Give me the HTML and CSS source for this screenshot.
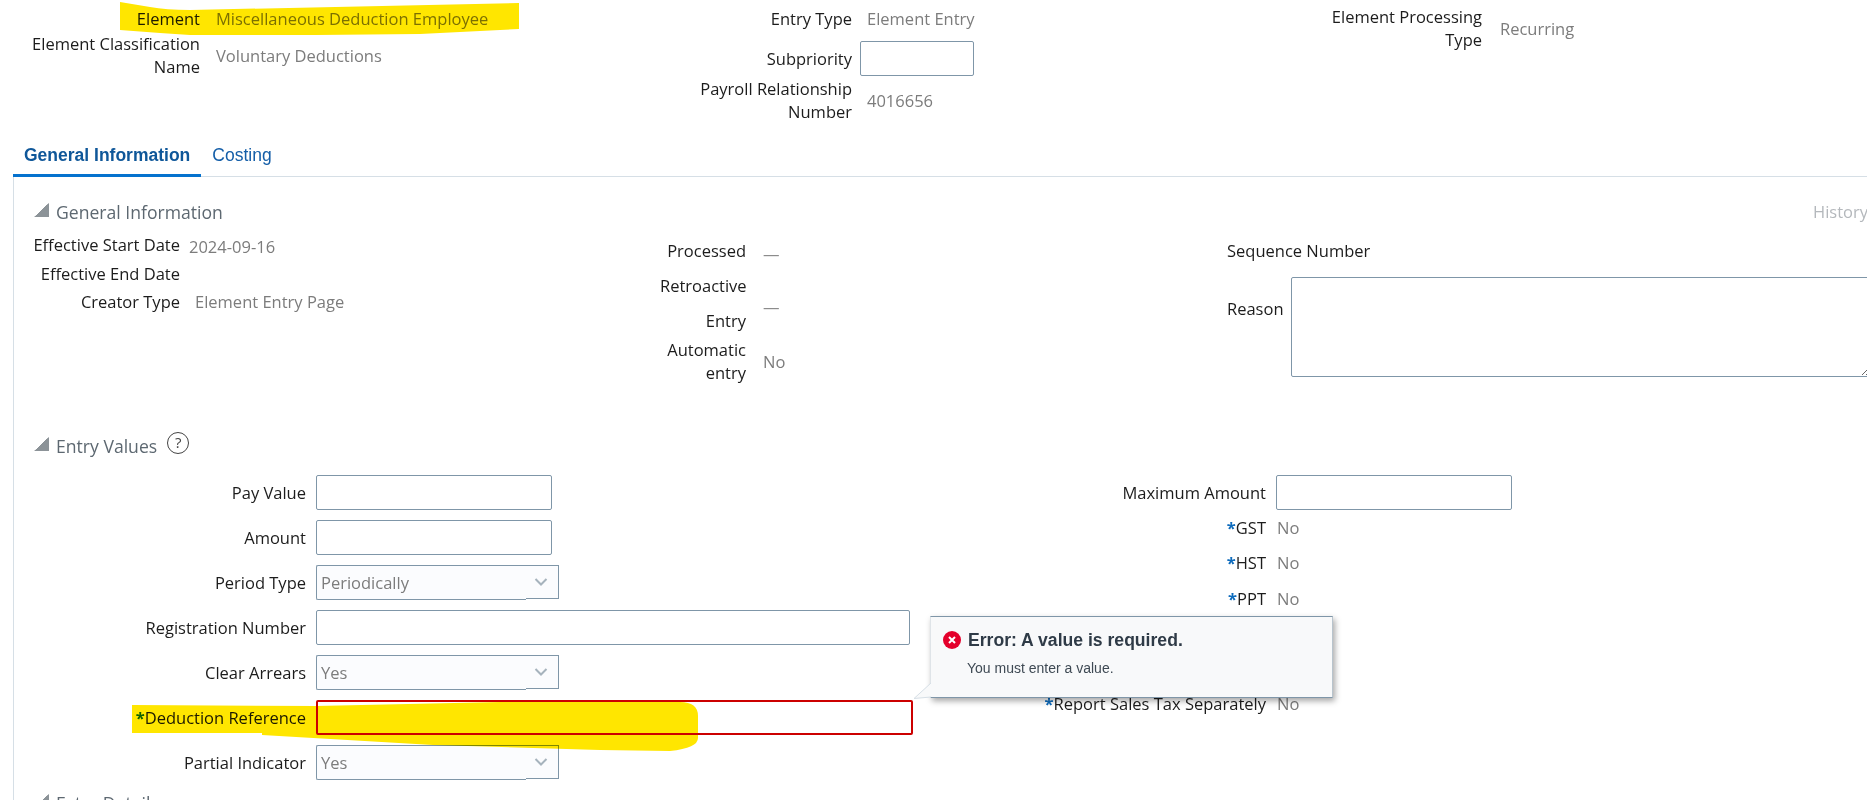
FILE: index.html
```html
<!DOCTYPE html>
<html lang="en">
<head>
<meta charset="utf-8">
<title>Element Entry</title>
<link rel="stylesheet" href="styles.css">
</head>
<body>
<div class="page">
  <header class="summary">
    <div class="col col-a">
      <div class="row"><span class="lbl">Element</span><span class="val">Miscellaneous Deduction Employee</span></div>
      <div class="row"><span class="lbl">Element Classification Name</span><span class="val">Voluntary Deductions</span></div>
    </div>
    <div class="col col-b">
      <div class="row"><span class="lbl">Entry Type</span><span class="val">Element Entry</span></div>
      <div class="row row-field"><span class="lbl">Subpriority</span><span class="input input-sub"></span></div>
      <div class="row"><span class="lbl">Payroll Relationship Number</span><span class="val">4016656</span></div>
    </div>
    <div class="col col-c">
      <div class="row"><span class="lbl">Element Processing Type</span><span class="val">Recurring</span></div>
    </div>
  </header>

  <nav class="tabs">
    <a class="tab tab-on">General Information</a>
    <a class="tab">Costing</a>
  </nav>

  <main class="content">
    <section class="general">
      <div class="sec-head">
        <i class="tri"></i><h2>General Information</h2>
        <span class="history">History</span>
      </div>
      <div class="gen-grid">
        <div class="gen-a">
          <div class="row"><span class="lbl">Effective Start Date</span><span class="val val-date">2024-09-16</span></div>
          <div class="row"><span class="lbl">Effective End Date</span></div>
          <div class="row"><span class="lbl">Creator Type</span><span class="val">Element Entry Page</span></div>
        </div>
        <div class="gen-b">
          <div class="row"><span class="lbl">Processed</span><span class="val val-dash">—</span></div>
          <div class="row row-tall"><span class="lbl">Retroactive Entry</span><span class="val val-dash">—</span></div>
          <div class="row"><span class="lbl">Automatic entry</span><span class="val">No</span></div>
        </div>
        <div class="gen-c">
          <div class="plain">Sequence Number</div>
          <div class="reason">
            <span class="reason-lbl">Reason</span>
            <textarea class="reason-box" aria-label="Reason"></textarea>
          </div>
        </div>
      </div>
    </section>

    <section class="values">
      <div class="sec-head">
        <i class="tri"></i><h2>Entry Values</h2><span class="help">?</span>
      </div>
      <div class="form-grid">
        <div class="form-a">
          <div class="row"><span class="lbl">Pay Value</span><span class="input"></span></div>
          <div class="row"><span class="lbl">Amount</span><span class="input"></span></div>
          <div class="row"><span class="lbl">Period Type</span>
            <span class="select"><span class="sel-text">Periodically</span><span class="sel-btn"><svg class="chev" viewBox="0 0 14 8"><path d="M1.5 1 7 6.5 12.5 1"/></svg></span></span></div>
          <div class="row"><span class="lbl">Registration Number</span><span class="input input-wide"></span></div>
          <div class="row"><span class="lbl">Clear Arrears</span>
            <span class="select"><span class="sel-text">Yes</span><span class="sel-btn"><svg class="chev" viewBox="0 0 14 8"><path d="M1.5 1 7 6.5 12.5 1"/></svg></span></span></div>
          <div class="row"><span class="lbl"><b class="req">*</b>Deduction Reference</span><span class="input input-error"></span></div>
          <div class="row"><span class="lbl">Partial Indicator</span>
            <span class="select"><span class="sel-text">Yes</span><span class="sel-btn"><svg class="chev" viewBox="0 0 14 8"><path d="M1.5 1 7 6.5 12.5 1"/></svg></span></span></div>
        </div>
        <div class="form-b">
          <div class="row"><span class="lbl">Maximum Amount</span><span class="input"></span></div>
          <div class="row row-ro row-first"><span class="lbl"><b class="req">*</b>GST</span><span class="val">No</span></div>
          <div class="row row-ro"><span class="lbl"><b class="req">*</b>HST</span><span class="val">No</span></div>
          <div class="row row-ro"><span class="lbl"><b class="req">*</b>PPT</span><span class="val">No</span></div>
          <div class="row row-ro row-last"><span class="lbl"><b class="req">*</b>Report Sales Tax Separately</span><span class="val">No</span></div>
        </div>
      </div>
    </section>

    <section class="extra">
      <div class="sec-head"><i class="tri"></i><h2>Extra Details</h2></div>
    </section>
  </main>

  <aside class="popup">
    <svg class="popup-tail" viewBox="0 0 19 18"><path d="M18 1 1 16.5 18 15"/></svg>
    <div class="popup-title">
      <svg class="err" viewBox="0 0 18 18"><circle cx="9" cy="9" r="9"/><path d="M6 6l6 6M12 6l-6 6"/></svg>
      <strong>Error: A value is required.</strong>
    </div>
    <p>You must enter a value.</p>
  </aside>

  <svg class="marker marker-top" viewBox="0 0 400 36"><path d="M0 0 30 5Q46 8 70 8L399 1V27L300 32 196 33 70 33 40 31 0 28Z"/></svg>
  <svg class="marker marker-ref" viewBox="0 0 567 50"><path d="M0 3 184 4 368 0H548Q566 0 566 14V36Q566 46 538 49L468 48 301 43 130 33V31H0Z"/></svg>
</div>
</body>
</html>
```
FILE: styles.css
```css
* { box-sizing: border-box; }
html, body { margin: 0; padding: 0; background: #fff; }
.page {
  position: relative;
  width: 1867px;
  height: 800px;
  overflow: hidden;
  font: 16.5px/23px "Open Sans", "Noto Sans", sans-serif;
  color: #1c1c1c;
}
.row { display: flex; align-items: center; }
.lbl { flex: none; width: var(--w); text-align: right; }
.val { margin-left: var(--g); color: #7c7c7c; white-space: nowrap; }
.req { color: #0f6cbd; font-weight: 700; }

/* inputs */
.input {
  display: block;
  flex: none;
  width: 236px;
  height: 35px;
  margin-left: 10px;
  border: 1px solid #7f96a8;
  border-radius: 2px;
  background: #fff;
}
.input-sub { width: 114px; margin-left: 8px; }
.input-wide { width: 594px; }
.input-error { width: 597px; border: 2px solid #cc0000; }
.select { display: flex; flex: none; width: 243px; height: 35px; margin-left: 10px; align-items: flex-start; }
.sel-text {
  width: 210px; height: 35px; padding: 5px 0 0 4px;
  border: 1px solid #7f96a8; border-right: 0; border-radius: 2px 0 0 2px;
  background: #fbfcfe; color: #7c7c7c;
}
.sel-btn {
  display: flex; align-items: center; justify-content: center;
  width: 33px; height: 34px; padding-right: 2px;
  border: 1px solid #7f96a8; border-left: 0;
  background: #fbfcfe;
}
.chev { width: 14px; height: 8px; }
.chev path { fill: none; stroke: #a6b3bd; stroke-width: 2; }

/* summary */
.summary { display: grid; grid-template-columns: 700px 626px 1fr; height: 134px; }
.col-a { --w: 200px; --g: 16px; padding-top: 7px; }
.col-a .row + .row { margin-top: 2px; }
.col-b { --w: 152px; --g: 15px; padding-top: 7px; }
.row-field { margin-top: 11px; margin-bottom: 1px; }
.col-c { --w: 156px; --g: 18px; padding-top: 5px; }

/* tabs */
.tabs { display: flex; height: 43px; margin-left: 13px; padding-top: 10px; border-bottom: 1px solid #d6dfe6; }
.tab { height: 33px; padding: 0 11px; font: 17.5px/22px "Liberation Sans", Arial, sans-serif; color: #145ea8; }
.tab-on { color: #0f5799; font-weight: 700; border-bottom: 3px solid #0572ce; }

/* body */
.content { margin-left: 13px; padding: 23px 0 0 20px; border-left: 1px solid #d6dfe6; }
.sec-head { position: relative; display: flex; align-items: center; height: 24px; }
.sec-head h2 { margin: 0; font-size: 17.6px; font-weight: 400; line-height: 24px; color: #5d6871; }
.tri {
  flex: none; width: 15px; height: 14px; margin: -4px 7px 0 0;
  background: linear-gradient(to bottom right, transparent 49.5%, #8c9398 50.5%);
}
.history { position: absolute; left: 1779px; top: 0; font-size: 16.5px; line-height: 24px; color: #b4b8bc; white-space: nowrap; }

.gen-grid { display: grid; grid-template-columns: 626px 567px 1fr; margin-top: 8px; height: 153px; }
.gen-a { --w: 152px; --g: 15px; margin-left: -6px; padding-top: 1px; }
.gen-a .row + .row { margin-top: 5.5px; }
.gen-a .val-date { margin-left: 9px; position: relative; top: 2px; }
.gen-b { --w: 86px; --g: 17px; padding-top: 7px; }
.gen-b .row + .row { margin-top: 6px; }
.gen-b .row-tall { line-height: 35px; }
.gen-b .row-tall + .row { margin-top: 0; }
.val-dash { position: relative; top: 3px; color: #8c8c8c; }
.gen-c { padding-top: 7px; }
.plain { white-space: nowrap; }
.reason { display: flex; margin-top: 15px; }
.reason-lbl { flex: none; width: 64px; padding-top: 20px; }
.reason-box {
  flex: none; display: block; width: 580px; height: 100px; margin: 0; padding: 0;
  border: 1px solid #7f96a8; border-radius: 2px; background: #fff; outline: none;
}

.values { margin-top: 49px; }
.help {
  flex: none; width: 22px; height: 22px; margin: -6px 0 0 10px;
  border: 1.5px solid #444; border-radius: 50%;
  font-size: 15px; line-height: 19px; text-align: center; color: #444;
}
.form-grid { display: grid; grid-template-columns: 966px 1fr; margin-top: 17px; }
.form-a { --w: 272px; display: flex; flex-direction: column; gap: 10px; }
.form-b { --w: 266px; --g: 11px; }
.row-ro { height: 35.25px; }
.row-last { margin-top: 70.5px; }
.extra { margin-top: 11px; }

/* error popup */
.popup {
  position: absolute; left: 930px; top: 616px; width: 403px; height: 82px;
  padding: 12px 0 0 12px;
  background: #f8f9fa;
  border: 1px solid #dfe4e8; border-top-color: #7f96a8; border-bottom-color: #7f96a8; border-right-color: #b8c4cd;
  box-shadow: 2px 3px 6px rgba(0, 0, 0, .35);
  font-family: "Liberation Sans", Arial, sans-serif;
}
.popup-tail { position: absolute; left: -18px; top: 65px; width: 19px; height: 18px; }
.popup-tail path { fill: #f8f9fa; stroke: #d6dfe6; stroke-width: 1; }
.popup-title { display: flex; align-items: center; gap: 7px; height: 22px; }
.err { flex: none; width: 18px; height: 18px; }
.err circle { fill: #e4002b; }
.err path { stroke: #fff; stroke-width: 2; fill: none; }
.popup-title strong { font-size: 17.6px; line-height: 22px; color: #2f3b47; white-space: nowrap; }
.popup p { margin: 8px 0 0 24px; font-size: 14px; line-height: 18px; color: #3f4a54; }

/* hand-drawn highlighter strokes */
.marker { position: absolute; mix-blend-mode: multiply; pointer-events: none; }
.marker path { fill: #ffe600; }
.marker-top { left: 120px; top: 2px; width: 400px; height: 36px; }
.marker-ref { left: 132px; top: 702px; width: 567px; height: 50px; }
```
